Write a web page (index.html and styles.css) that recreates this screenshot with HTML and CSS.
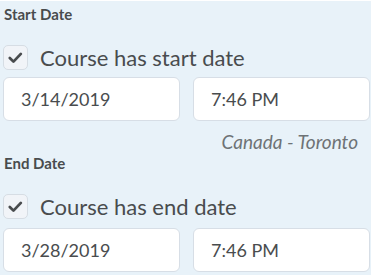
FILE: index.html
```html
<!DOCTYPE html>
<html>
<head>
<meta charset="utf-8">
<link rel="stylesheet" href="styles.css">
</head>
<body>
<div class="panel">
  <div class="label">Start Date</div>
  <div class="check-row">
    <span class="box"><svg width="25" height="25" viewBox="0 0 25 25"><path d="M6.3 13 L10.3 17 L18.3 8.6" fill="none" stroke="#494c4e" stroke-width="3" stroke-linecap="round" stroke-linejoin="round"/></svg></span>
    <span class="check-text">Course has start date</span>
  </div>
  <div class="inputs">
    <div class="field">3/14/2019</div>
    <div class="field">7:46 PM</div>
  </div>
  <div class="tz">Canada - Toronto</div>
  <div class="label label-end">End Date</div>
  <div class="check-row">
    <span class="box"><svg width="25" height="25" viewBox="0 0 25 25"><path d="M6.3 13 L10.3 17 L18.3 8.6" fill="none" stroke="#494c4e" stroke-width="3" stroke-linecap="round" stroke-linejoin="round"/></svg></span>
    <span class="check-text">Course has end date</span>
  </div>
  <div class="inputs inputs-end">
    <div class="field">3/28/2019</div>
    <div class="field">7:46 PM</div>
  </div>
</div>
</body>
</html>
```
FILE: styles.css
```css
html, body {
  margin: 0;
  padding: 0;
  background: #ffffff;
}
body {
  font-family: Lato, "Open Sans", sans-serif;
  color: #494c4e;
}
.panel {
  width: 371px;
  height: 274px;
  margin-top: 1px;
  padding: 3px 0 0 3px;
  box-sizing: border-box;
  background: #e8f2f9;
}
.label {
  font-weight: 700;
  font-size: 15px;
  line-height: 20px;
  color: #494c4e;
  padding-left: 1px;
}
.label-end {
  margin-top: -1px;
}
.check-row {
  display: flex;
  align-items: center;
  height: 32px;
  margin-top: 17px;
}
.box {
  width: 25px;
  height: 25px;
  box-sizing: border-box;
  border: 1px solid #d6dde4;
  border-radius: 5px;
  background: #f1f4f8;
  display: flex;
  align-items: center;
  justify-content: center;
}
.box svg {
  display: block;
}
.check-text {
  font-size: 22px;
  margin-left: 12px;
}
.inputs {
  display: grid;
  grid-template-columns: 177px 177px;
  column-gap: 13px;
  margin-top: 4px;
}
.inputs-end {
  margin-top: 6px;
}
.field {
  height: 44px;
  box-sizing: border-box;
  background: #ffffff;
  border: 1px solid #d7dee6;
  border-radius: 6px;
  padding-left: 17px;
  display: flex;
  align-items: center;
  font-size: 18px;
}
.tz {
  margin-top: 9px;
  line-height: 24px;
  font-size: 19px;
  font-style: italic;
  color: #6e7376;
  text-align: right;
  padding-right: 13px;
}
```
